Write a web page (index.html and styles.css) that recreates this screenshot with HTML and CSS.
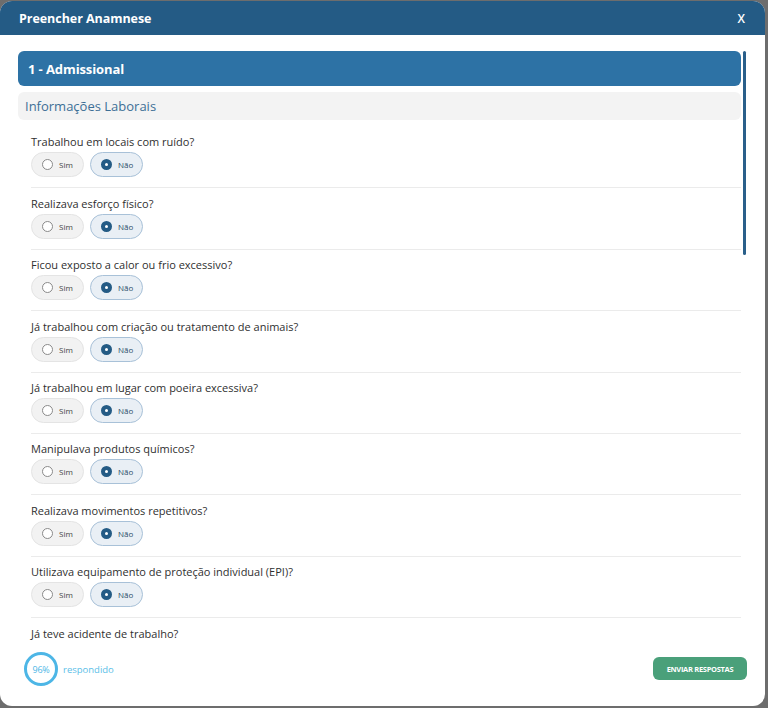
FILE: index.html
```html
<!DOCTYPE html>
<html lang="pt">
<head>
<meta charset="utf-8">
<title>Preencher Anamnese</title>
<link rel="stylesheet" href="styles.css">
</head>
<body>
<div class="modal">
  <div class="modal-header">
    <span class="modal-title">Preencher Anamnese</span>
    <span class="modal-close">X</span>
  </div>
  <div class="scroll">
    <div class="content">
      <div class="section-title">1 - Admissional</div>
      <div class="subsection">Informações Laborais</div>
      <div class="questions">
        <div class="question">
          <div class="q-label">Trabalhou em locais com ruído?</div>
          <div class="options"><span class="opt"><span class="dot"></span>Sim</span><span class="opt opt-on"><span class="dot"></span>Não</span></div>
        </div>
        <div class="question">
          <div class="q-label">Realizava esforço físico?</div>
          <div class="options"><span class="opt"><span class="dot"></span>Sim</span><span class="opt opt-on"><span class="dot"></span>Não</span></div>
        </div>
        <div class="question">
          <div class="q-label">Ficou exposto a calor ou frio excessivo?</div>
          <div class="options"><span class="opt"><span class="dot"></span>Sim</span><span class="opt opt-on"><span class="dot"></span>Não</span></div>
        </div>
        <div class="question">
          <div class="q-label">Já trabalhou com criação ou tratamento de animais?</div>
          <div class="options"><span class="opt"><span class="dot"></span>Sim</span><span class="opt opt-on"><span class="dot"></span>Não</span></div>
        </div>
        <div class="question">
          <div class="q-label">Já trabalhou em lugar com poeira excessiva?</div>
          <div class="options"><span class="opt"><span class="dot"></span>Sim</span><span class="opt opt-on"><span class="dot"></span>Não</span></div>
        </div>
        <div class="question">
          <div class="q-label">Manipulava produtos químicos?</div>
          <div class="options"><span class="opt"><span class="dot"></span>Sim</span><span class="opt opt-on"><span class="dot"></span>Não</span></div>
        </div>
        <div class="question">
          <div class="q-label">Realizava movimentos repetitivos?</div>
          <div class="options"><span class="opt"><span class="dot"></span>Sim</span><span class="opt opt-on"><span class="dot"></span>Não</span></div>
        </div>
        <div class="question">
          <div class="q-label">Utilizava equipamento de proteção individual (EPI)?</div>
          <div class="options"><span class="opt"><span class="dot"></span>Sim</span><span class="opt opt-on"><span class="dot"></span>Não</span></div>
        </div>
        <div class="question">
          <div class="q-label">Já teve acidente de trabalho?</div>
          <div class="options"><span class="opt"><span class="dot"></span>Sim</span><span class="opt opt-on"><span class="dot"></span>Não</span></div>
        </div>
      </div>
    </div>
    <div class="scrollbar"><div class="thumb"></div></div>
  </div>
  <div class="modal-footer">
    <div class="progress">
      <div class="ring">96%</div>
      <span class="progress-label">respondido</span>
    </div>
    <button class="send">ENVIAR RESPOSTAS</button>
  </div>
</div>
</body>
</html>
```
FILE: styles.css
```css
html, body {
  margin: 0;
  padding: 0;
  height: 708px;
  overflow: hidden;
}
body {
  background: #6d6d6d;
  font-family: "Open Sans", "Noto Sans", sans-serif;
  padding-top: 1px;
  box-sizing: border-box;
}
.modal {
  width: 765px;
  height: 705px;
  background: #ffffff;
  border-radius: 12px;
  overflow: hidden;
  display: flex;
  flex-direction: column;
}
.modal-header {
  height: 34px;
  flex: none;
  background: #245b85;
  display: flex;
  align-items: center;
  justify-content: space-between;
  padding: 0 20px 0 19px;
  color: #ffffff;
}
.modal-title {
  font-weight: 700;
  font-size: 12.5px;
  letter-spacing: -0.05px;
}
.modal-close {
  font-size: 12px;
  font-weight: 600;
}
.scroll {
  flex: none;
  height: 593px;
  margin-top: 16px;
  padding-left: 18px;
  display: flex;
  overflow: hidden;
}
.content {
  width: 723px;
  flex: none;
}
.scrollbar {
  width: 3px;
  margin-left: 2px;
}
.thumb {
  height: 204px;
  background: #2a5f8a;
  border-radius: 2px;
}
.section-title {
  height: 35px;
  background: #2d72a5;
  border-radius: 6px;
  color: #ffffff;
  font-weight: 700;
  font-size: 13px;
  display: flex;
  align-items: center;
  padding-left: 10px;
  letter-spacing: -0.1px;
}
.subsection {
  margin-top: 6px;
  height: 28px;
  background: #f3f3f3;
  border-radius: 6px;
  color: #3d6f96;
  font-size: 13px;
  display: flex;
  align-items: center;
  padding-left: 7px;
}
.questions {
  margin-left: 13px;
  padding-top: 7px;
}
.question {
  padding: 7.4px 0 10px;
  border-bottom: 1px solid #ebebeb;
}
.q-label {
  font-size: 11px;
  line-height: 16px;
  color: #2f2f2f;
}
.options {
  margin-top: 2px;
  display: flex;
  gap: 6px;
}
.opt {
  width: 53px;
  height: 25px;
  box-sizing: border-box;
  border-radius: 13px;
  background: #f2f2f2;
  border: 1px solid #e4e4e4;
  display: flex;
  align-items: center;
  padding-left: 10px;
  font-size: 8px;
  color: #444444;
  gap: 6px;
}
.dot {
  width: 11px;
  height: 11px;
  box-sizing: border-box;
  border-radius: 50%;
  border: 1.5px solid #8a8a8a;
  background: #ffffff;
}
.opt-on {
  background: #e9eff5;
  border-color: #a8c1d8;
  color: #2c4d6a;
}
.opt-on .dot {
  border: 4px solid #245b85;
  background: #ffffff;
}
.modal-footer {
  flex: 1;
  display: flex;
  align-items: center;
  justify-content: space-between;
  padding: 0 18px 12px 24px;
}
.progress {
  display: flex;
  align-items: center;
  gap: 5px;
}
.ring {
  width: 34px;
  height: 34px;
  box-sizing: border-box;
  border-radius: 50%;
  border: 3px solid #4db6e6;
  display: flex;
  align-items: center;
  justify-content: center;
  font-size: 9px;
  color: #4db6e6;
  letter-spacing: -0.3px;
}
.progress-label {
  font-size: 9.5px;
  color: #5bc0e8;
}
.send {
  width: 94px;
  height: 23px;
  border: none;
  border-radius: 6px;
  background: #4aa07a;
  color: #ffffff;
  font-family: "Open Sans", "Noto Sans", sans-serif;
  font-weight: 700;
  font-size: 7.5px;
  letter-spacing: -0.3px;
  padding: 0;
  margin-top: -1px;
}
```
